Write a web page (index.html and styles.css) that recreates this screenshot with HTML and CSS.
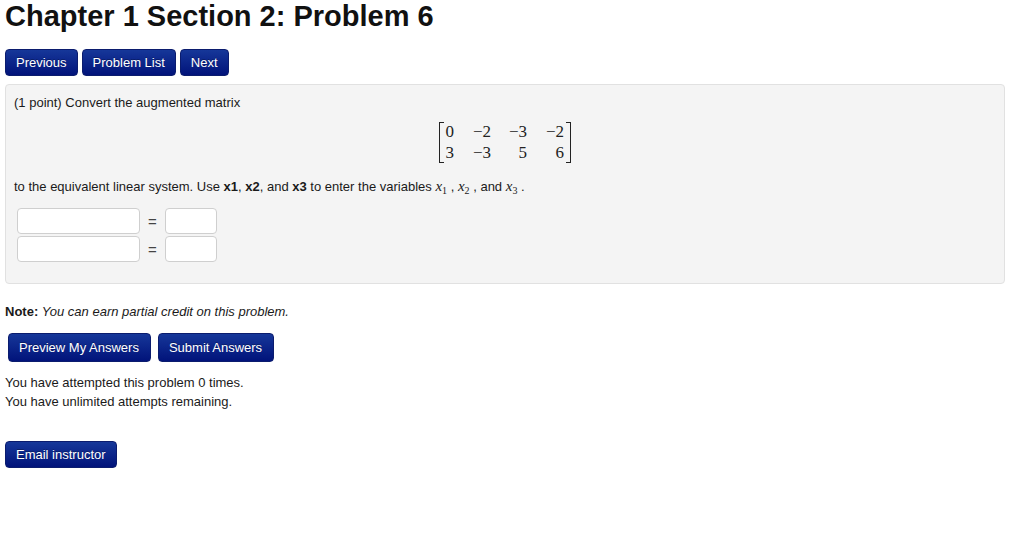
FILE: index.html
```html
<!DOCTYPE html>
<html lang="en">
<head>
    <meta charset="UTF-8">
    <title>Chapter 1 Section 2: Problem 6</title>
    <link rel="stylesheet" href="styles.css">
</head>
<body>
    <h1>Chapter 1 Section 2: Problem 6</h1>

    <div class="nav">
        <button class="btn">Previous</button>
        <button class="btn">Problem List</button>
        <button class="btn">Next</button>
    </div>

    <div class="well">
        <p class="line">(1 point) Convert the augmented matrix</p>

        <div class="matrix-wrap">
            <div class="matrix">
                <span class="bracket left"></span>
                <div class="cells">
                    <span>0</span><span>&minus;2</span><span>&minus;3</span><span>&minus;2</span>
                    <span>3</span><span>&minus;3</span><span>5</span><span>6</span>
                </div>
                <span class="bracket right"></span>
            </div>
        </div>

        <p class="line gap">to the equivalent linear system. Use <b>x1</b>, <b>x2</b>, and <b>x3</b> to enter the variables
            <span class="var">x<sub>1</sub></span> , <span class="var">x<sub>2</sub></span> , and <span class="var">x<sub>3</sub></span> .</p>

        <div class="eqs">
            <div class="eq">
                <input class="lhs" type="text">
                <span class="equals">=</span>
                <input class="rhs" type="text">
            </div>
            <div class="eq">
                <input class="lhs" type="text">
                <span class="equals">=</span>
                <input class="rhs" type="text">
            </div>
        </div>
    </div>

    <p class="note"><b>Note:</b> <i>You can earn partial credit on this problem.</i></p>

    <div class="submit">
        <button class="btn tall">Preview My Answers</button>
        <button class="btn tall">Submit Answers</button>
    </div>

    <div class="attempts">
        <p>You have attempted this problem 0 times.</p>
        <p>You have unlimited attempts remaining.</p>
    </div>

    <button class="btn email">Email instructor</button>
</body>
</html>
```

FILE: styles.css
```css
body {
    margin: 0;
    padding: 0 19px 0 5px;
    font-family: 'Liberation Sans', Arial, sans-serif;
    font-size: 13px;
    color: #1a1a1a;
    background: white;
}
h1 {
    margin: 0;
    font-size: 29px;
    line-height: 32px;
    font-weight: bold;
    color: #111;
}
.nav {
    display: flex;
    gap: 4px;
    margin-top: 17px;
}
.btn {
    font-family: 'Liberation Sans', Arial, sans-serif;
    font-size: 13px;
    line-height: 17px;
    padding: 4px 10px;
    color: white;
    background: linear-gradient(#163799, #01137a);
    border: 1px solid #0b1c6e;
    border-radius: 4px;
    text-shadow: 0 -1px 0 rgba(0, 0, 0, 0.3);
    cursor: pointer;
}
.btn.tall {padding: 5px 11px 5px 10px;}
.well {
    margin-top: 8px;
    padding: 9px 8px 21px;
    background: #f4f4f4;
    border: 1px solid #e1e1e1;
    border-radius: 4px;
}
.line {margin: 0; line-height: 18px;}
.line.gap {margin-top: 14px;}
.matrix-wrap {
    display: flex;
    justify-content: center;
    margin-top: 10px;
}
.matrix {
    display: flex;
    align-items: stretch;
    height: 41px;
}
.bracket {
    width: 4px;
    border-top: 1px solid #222;
    border-bottom: 1px solid #222;
}
.bracket.left {border-left: 1.5px solid #222;}
.bracket.right {border-right: 1.5px solid #222;}
.cells {
    display: grid;
    grid-template-columns: 9px 37px 36px 37px;
    grid-auto-rows: 21px;
    padding: 0 2px 0 1px;
    font-family: 'Liberation Serif', 'Times New Roman', serif;
    font-size: 17px;
    line-height: 20px;
    text-align: right;
    color: #222;
}
.var {
    font-family: 'Liberation Serif', 'Times New Roman', serif;
    font-style: italic;
    font-size: 15px;
}
.var sub {font-size: 10px; font-style: normal; vertical-align: -3px; line-height: 0;}
.eqs {
    display: flex;
    flex-direction: column;
    gap: 2px;
    margin: 12px 0 0 3px;
}
.eq {display: flex; align-items: center;}
.eq input {
    box-sizing: border-box;
    height: 26px;
    margin: 0;
    background: white;
    border: 1px solid #cfcfcf;
    border-radius: 4px;
}
.lhs {width: 123px;}
.rhs {width: 52px;}
.equals {width: 25px; text-align: center; font-size: 15px; color: #444;}
.note {margin: 19px 0 0; line-height: 18px;}
.submit {
    display: flex;
    gap: 7px;
    margin: 12px 0 0 3px;
}
.attempts {margin-top: 11px;}
.attempts p {margin: 0; line-height: 19px;}
.email {margin-top: 30px;}
```
